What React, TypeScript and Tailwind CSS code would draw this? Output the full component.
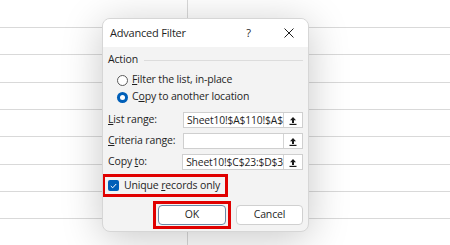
import React from 'react';

const rowHeights = ['h-[28px]', 'h-[27px]', 'h-[28px]', 'h-[27px]', 'h-[27px]', 'h-[28px]', 'h-[27px]', 'h-[27px]', 'h-[28px]'];

function SheetColumn({ className }: { className: string }) {
  return (
    <div className={className}>
      {rowHeights.map((h, i) => (
        <div key={i} className={`${h} border-b border-[#d9d9d9]`} />
      ))}
    </div>
  );
}

function PickButton() {
  return (
    <div className="w-[19px] h-full flex items-center justify-center bg-white border-l border-[#d4d4d4]">
      <svg width="8" height="9" viewBox="0 0 8 9">
        <path d="M4 1 L7 4.2 L5 4.2 L5 7 L3 7 L3 4.2 L1 4.2 Z" fill="#1a1a1a" />
        <rect x="0.5" y="7.8" width="7" height="1.2" fill="#1a1a1a" />
      </svg>
    </div>
  );
}

function RangeRow({ label, value }: { label: React.ReactNode; value: string }) {
  return (
    <div className="flex items-center h-[16px]">
      <div className="w-[75px] text-[10.5px] tracking-[-0.15px] text-[#1f1f1f]">{label}</div>
      <div className="flex-1 h-[16px] flex bg-white border border-[#cfcfcf]">
        <div className="flex-1 overflow-hidden whitespace-nowrap pl-[3px] text-[10.3px] leading-[14px] text-[#1f1f1f]">
          {value}
        </div>
        <PickButton />
      </div>
    </div>
  );
}

export default function App() {
  return (
    <div
      className="relative w-[450px] h-[245px] overflow-hidden bg-white"
      style={{ fontFamily: '"Open Sans", "Noto Sans", sans-serif' }}
    >
      {/* Sheet grid behind the dialog */}
      <div className="flex">
        <SheetColumn className="w-[188px] border-r border-[#d9d9d9]" />
        <SheetColumn className="flex-1" />
      </div>

      {/* Advanced Filter dialog */}
      <div className="absolute left-[102px] top-[18px] w-[207px] h-[214px] rounded-[8px] bg-[#f3f3f3] border border-[#d6d6d6] shadow-[0_6px_40px_rgba(0,0,0,0.22)] overflow-hidden flex flex-col">
        <div className="h-[28px] bg-white flex items-center pl-[7px] pr-[14px] text-[#1f1f1f]">
          <span className="text-[11px] tracking-[-0.2px]">Advanced Filter</span>
          <span className="ml-auto mr-[33px] text-[11px]">?</span>
          <svg width="10" height="10" viewBox="0 0 10 10">
            <path d="M0.5 0.5 L9.5 9.5 M9.5 0.5 L0.5 9.5" stroke="#1f1f1f" strokeWidth="1" />
          </svg>
        </div>

        <div className="flex-1 flex flex-col pl-[5px] pr-[5px] pt-[5px] tracking-[-0.15px]">
          <div className="flex items-center h-[16px]">
            <span className="text-[10.5px] text-[#1f1f1f]">Action</span>
            <div className="flex-1 ml-[6px] border-t border-[#dcdcdc]" />
          </div>

          <div className="flex flex-col gap-[5px] pl-[9px] mt-[6px]">
            <div className="flex items-center gap-[4px] h-[12px]">
              <div className="w-[11px] h-[11px] rounded-full border border-[#5b5b5b] bg-white" />
              <span className="text-[10.5px] text-[#1f1f1f]">
                <u>F</u>ilter the list, in-place
              </span>
            </div>
            <div className="flex items-center gap-[4px] h-[12px]">
              <div className="w-[11px] h-[11px] rounded-full bg-[#005fb8] flex items-center justify-center">
                <div className="w-[5px] h-[5px] rounded-full bg-white" />
              </div>
              <span className="text-[10.5px] text-[#1f1f1f]">
                C<u>o</u>py to another location
              </span>
            </div>
          </div>

          <div className="flex flex-col gap-[5px] mt-[9px]">
            <RangeRow label={<><u>L</u>ist range:</>} value="Sheet10!$A$110!$A$" />
            <RangeRow label={<><u>C</u>riteria range:</>} value="" />
            <RangeRow label={<>Copy <u>t</u>o:</>} value="Sheet10!$C$23:$D$3" />
          </div>

          <div className="mt-[4px] -ml-[6px] w-[126px] h-[23px] border-[3px] border-[#e00000] flex items-center pl-[3px] gap-[5px]">
            <div className="w-[11px] h-[11px] rounded-[2px] bg-[#005fb8] flex items-center justify-center">
              <svg width="7" height="6" viewBox="0 0 7 6">
                <path d="M0.8 3 L2.7 4.8 L6.2 1" stroke="white" strokeWidth="1" fill="none" />
              </svg>
            </div>
            <span className="text-[10.5px] text-[#1f1f1f]">
              Unique <u>r</u>ecords only
            </span>
          </div>

          <div className="flex items-center justify-end gap-[5px] mt-[4px]">
            <div className="w-[78px] h-[28px] border-[3px] border-[#e00000] flex items-center justify-center">
              <div className="w-[68px] h-[20px] rounded-[4px] bg-white border border-[#6a89a6] flex items-center justify-center text-[10.5px] text-[#1f1f1f]">
                OK
              </div>
            </div>
            <div className="w-[67px] h-[20px] rounded-[4px] bg-white border border-[#d0d0d0] flex items-center justify-center text-[10.5px] text-[#1f1f1f]">
              Cancel
            </div>
          </div>
        </div>
      </div>
    </div>
  );
}
